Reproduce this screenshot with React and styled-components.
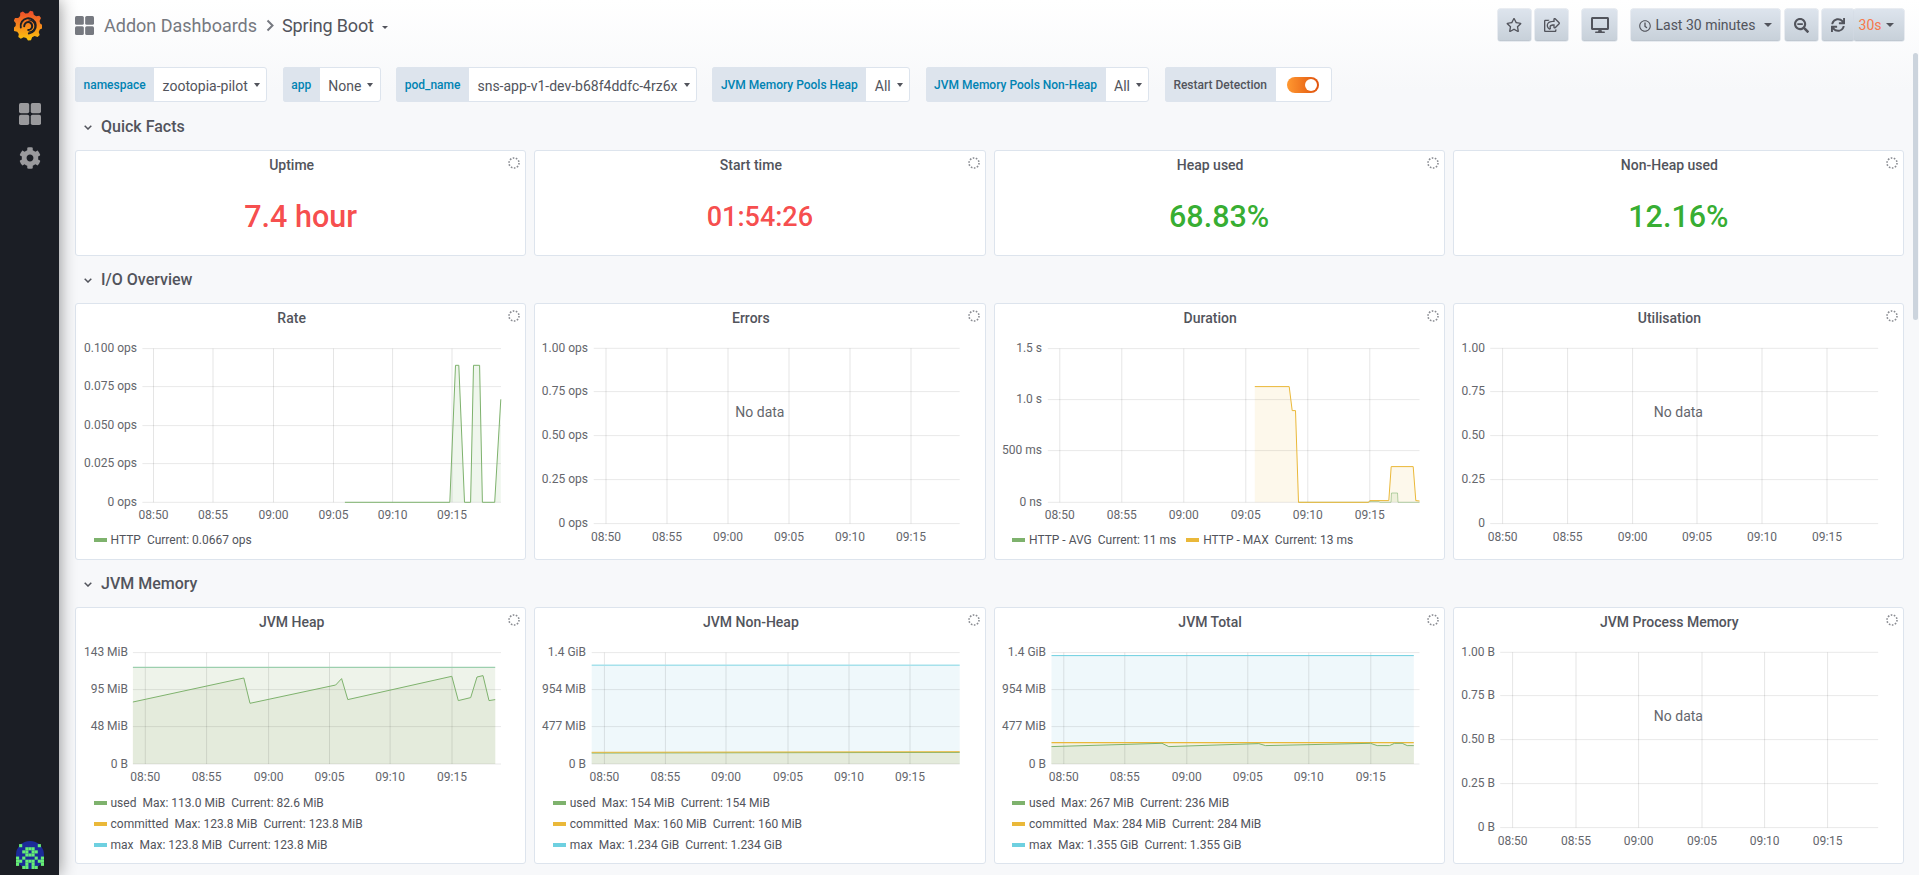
import React from 'react';
import styled, { createGlobalStyle } from 'styled-components';
import { FaRegStar, FaRegShareSquare, FaDesktop, FaRegClock, FaSearchMinus, FaSync, FaCog } from 'react-icons/fa';

const GlobalStyle = createGlobalStyle`
    html, body {
        margin: 0;
        height: 100%;
        overflow: hidden;
        background: #f7f8fa;
        font-family: Roboto, "Liberation Sans", sans-serif;
        color: #52545c;
    }
`;

const GREEN = '#7eb26d';
const YELLOW = '#eab839';
const TEAL = '#6ed0e0';

const Layout = styled.div`
    display: flex;
    height: 875px;
    overflow: hidden;
    position: relative;
`;

const SideMenu = styled.nav`
    width: 59px;
    flex: none;
    display: flex;
    flex-direction: column;
    align-items: center;
    background: #1b1e25;
    box-shadow: 0 0 16px rgba(0, 0, 0, 0.45);
    position: relative;
    z-index: 2;
    color: #9a9a9d;
`;

const LogoSlot = styled.div`
    height: 103px;
    padding: 10px 4px 0 0;
    box-sizing: border-box;
`;

const SideIcon = styled.div`
    height: 44px;
    font-size: 22px;
    line-height: 0;
`;

const AvatarSlot = styled.div`
    margin-top: auto;
    margin-bottom: 6px;
    line-height: 0;
`;

const Main = styled.main`
    flex: 1;
    min-width: 0;
    padding: 0 15px 0 16px;
    background: linear-gradient(180deg, #ffffff 0, #f7f8fa 90px);
`;

const Navbar = styled.header`
    height: 50px;
    padding-top: 9px;
    box-sizing: border-box;
    display: flex;
    align-items: flex-start;
`;

const Breadcrumb = styled.div`
    display: flex;
    align-items: center;
    height: 32px;
    font-size: 18px;
    color: #767980;
`;

const BreadIcon = styled.span`
    width: 19px;
    height: 19px;
    margin-right: 10px;
    line-height: 0;
    color: #767980;
`;

const Chevron = styled.svg`
    margin: 1px 8px 0 9px;
`;

const Current = styled.span`
    color: #52545c;
    letter-spacing: -0.15px;
`;

const TitleCaret = styled.i`
    width: 0;
    height: 0;
    margin: 4px 0 0 8px;
    border: 3px solid transparent;
    border-top: 3px solid #52545c;
    border-bottom: 0;
`;

const Toolbar = styled.div`
    margin-left: auto;
    display: flex;
`;

const Btn = styled.button`
    width: ${p => p.$w}px;
    height: 32px;
    margin-left: ${p => p.$gap || 0}px;
    padding: 0;
    display: flex;
    align-items: center;
    justify-content: center;
    gap: 4px;
    border: 0;
    border-radius: 2px;
    background: linear-gradient(180deg, #dde4ed, #c7d0d9);
    box-shadow: inset 0 -1px 0 rgba(0, 0, 0, 0.04), 0 0 0 0.5px #d3dae3;
    color: #52545c;
    font: 400 14px Roboto, "Liberation Sans", sans-serif;
`;

const IntervalBtn = styled(Btn)`
    padding-right: 5px;
    box-sizing: border-box;
`;

const Orange = styled.span`
    color: #f7784a;
`;

const NavCaret = styled.i`
    width: 0;
    height: 0;
    margin-left: ${p => p.$gap || 4}px;
    border: 4px solid transparent;
    border-top: 4px solid #52545c;
    border-bottom: 0;
`;

const ClockIcon = styled(FaRegClock)`
    margin-top: 2px;
`;

const Variables = styled.div`
    margin-top: 17px;
    height: 35px;
    display: flex;
    gap: 15.4px;
`;

const Variable = styled.div`
    display: flex;
    height: 35px;
    box-sizing: border-box;
    background: #fff;
    border: 1px solid #dde4ed;
    border-radius: 3px;
`;

const VarLabel = styled.label`
    display: flex;
    align-items: center;
    padding: 0 8.5px;
    margin: -1px 0 -1px -1px;
    background: #dde4ed;
    border-radius: 3px 0 0 3px;
    font-size: 12px;
    font-weight: 500;
    white-space: nowrap;
    color: ${p => (p.$plain ? '#52545c' : '#0083b3')};
`;

const VarValue = styled.div`
    display: flex;
    align-items: center;
    padding: 2px 6.5px 0 8.5px;
    font-size: 14px;
    white-space: nowrap;
`;

const ValueCaret = styled.i`
    width: 0;
    height: 0;
    margin: -1px 0 0 6px;
    border: 3.5px solid transparent;
    border-top: 4px solid #52545c;
    border-bottom: 0;
`;

const SwitchSlot = styled.div`
    width: 55px;
    display: flex;
    align-items: center;
    justify-content: center;
`;

const Switch = styled.div`
    width: 32px;
    height: 16px;
    border-radius: 8px;
    background: linear-gradient(90deg, #ff9830, #e0530e);
    position: relative;
    &::after {
        content: '';
        position: absolute;
        right: 2px;
        top: 2px;
        width: 12px;
        height: 12px;
        border-radius: 50%;
        background: #fff;
    }
`;

const RowTitle = styled.h6`
    margin: 0;
    height: ${p => p.$h}px;
    display: flex;
    align-items: center;
    font-size: 16px;
    font-weight: 500;
    color: #52545c;
`;

const RowChevron = styled.svg`
    margin: 3px 9px 0 9px;
`;

const Grid = styled.section`
    display: grid;
    grid-template-columns: repeat(4, 1fr);
    gap: 8px;
`;

const Panel = styled.article`
    height: ${p => p.$h}px;
    box-sizing: border-box;
    background: #fff;
    border: 1px solid #dde4ed;
    border-radius: 3px;
    position: relative;
    overflow: hidden;
`;

const PanelTitle = styled.div`
    height: 35px;
    padding-right: 18px;
    box-sizing: border-box;
    display: flex;
    align-items: center;
    justify-content: center;
    padding-bottom: 7px;
    font-size: 14px;
    font-weight: 500;
    color: #52545c;
`;

const Spinner = styled.svg`
    position: absolute;
    top: 5px;
    right: 4px;
`;

const StatValue = styled.div`
    margin-top: 3px;
    text-align: center;
    font-size: ${p => p.$size}px;
    font-weight: 500;
    line-height: 56px;
    color: ${p => p.$color};
`;

const ChartSvg = styled.svg`
    display: block;
    width: 100%;
`;

const AxisText = styled.text`
    font-family: Roboto, "Liberation Sans", sans-serif;
    font-size: 12px;
    fill: #64666c;
`;

const NoData = styled.div`
    position: absolute;
    left: 0;
    right: 0;
    top: 100px;
    text-align: center;
    font-size: 14px;
    color: #64666c;
`;

const Legend = styled.div`
    padding-left: 17.5px;
    display: flex;
    flex-direction: ${p => (p.$stacked ? 'column' : 'row')};
    gap: ${p => (p.$stacked ? 0 : 10)}px;
`;

const LegendItem = styled.div`
    height: 21px;
    display: flex;
    align-items: center;
    font-size: 12px;
    white-space: nowrap;
    color: #52545c;
`;

const Swatch = styled.i`
    width: 13px;
    height: 4px;
    margin-right: 4px;
    background: ${p => p.$color};
`;

const LegendStat = styled.span`
    margin-left: 6px;
`;

const ScrollThumb = styled.div`
    position: absolute;
    top: 53px;
    right: 1px;
    width: 5px;
    height: 267px;
    border-radius: 3px;
    background: #ccd4dd;
    z-index: 3;
`;

// drawings
const DashIcon = ({ size }) => (
    <svg width={size} height={size} viewBox="0 0 20 20" fill="currentColor">
        <rect x="0" y="0" width="9.3" height="9.3" rx="1.6" />
        <rect x="10.7" y="0" width="9.3" height="9.3" rx="1.6" />
        <rect x="0" y="10.7" width="9.3" height="9.3" rx="1.6" />
        <rect x="10.7" y="10.7" width="9.3" height="9.3" rx="1.6" />
    </svg>
);

const cogPoints = () => {
    const pts = [];
    for (let i = 0; i < 9; i++) {
        const a = (i / 9) * Math.PI * 2 - Math.PI / 2 + 0.25;
        [[-0.24, 12.4], [-0.1, 15], [0.1, 15], [0.24, 12.4]].forEach(([d, r]) => {
            pts.push(`${(14 + r * Math.cos(a + d)).toFixed(1)},${(15.6 + r * Math.sin(a + d)).toFixed(1)}`);
        });
    }
    return pts.join(' ');
};

const Logo = () => (
    <svg width="28" height="31" viewBox="0 0 28 31">
        <defs>
            <linearGradient id="logo" x1="0" y1="0" x2="0" y2="1">
                <stop offset="0" stopColor="#ee4a2c" />
                <stop offset="1" stopColor="#fcc50c" />
            </linearGradient>
        </defs>
        <polygon points={cogPoints()} fill="url(#logo)" />
        <path d="M6.8 17.5a7.6 7.6 0 1 1 8 6" fill="none" stroke="#1b1e25" strokeWidth="1.9" strokeLinecap="round" />
        <path d="M15 22a6 6 0 0 0 0-12" fill="none" stroke="#1b1e25" strokeWidth="1.2" strokeLinecap="round" />
        <path d="M10.2 16.2a4 4 0 1 1 4 3.9" fill="none" stroke="#1b1e25" strokeWidth="2" strokeLinecap="round" />
    </svg>
);

const AVATAR = [
    '.........',
    '.#.....#.',
    '...###...',
    '..##.##..',
    '...###...',
    '#.#...#.#',
    '##.###.##',
    '#..#.#..#',
    '..##.##..',
];

const Avatar = () => (
    <svg width="28" height="28" viewBox="0 0 27 27">
        <circle cx="13.5" cy="13.5" r="13.5" fill="#1c2b99" />
        {AVATAR.map((row, y) =>
            row.split('').map((c, x) => (c === '#' ? <rect key={`${x}-${y}`} x={x * 3} y={y * 3} width="3" height="3" fill="#66ee77" /> : null))
        )}
    </svg>
);

const PanelSpinner = () => (
    <Spinner width="14" height="14" viewBox="0 0 14 14">
        <circle cx="7" cy="7" r="5" fill="none" stroke="#8a8c92" strokeWidth="1.6" strokeDasharray="1.6 1.5" />
    </Spinner>
);

const TIMES = ['08:50', '08:55', '09:00', '09:05', '09:10', '09:15'];

const toPoints = pts => pts.map(p => p.join(',')).join(' ');

// coordinates below are pixels inside the panel
const Chart = ({ c, height }) => {
    const { ys, labelX, x0, x1, ticks, series = [] } = c;
    const top = ys[0][0];
    const bottom = ys[ys.length - 1][0];
    return (
        <ChartSvg height={height} viewBox={`1 36 449.25 ${height}`} preserveAspectRatio="xMinYMin slice">
            {series.filter(s => s.fill).map((s, i) => (
                <polygon
                    key={i}
                    fill={s.fill}
                    points={toPoints([[s.pts[0][0], bottom], ...s.pts, [s.pts[s.pts.length - 1][0], bottom]])}
                />
            ))}
            {ticks.map(x => (
                <line key={x} x1={x} x2={x} y1={top} y2={bottom} stroke="rgba(0,0,0,0.1)" />
            ))}
            {ys.map(([y, t]) => (
                <React.Fragment key={t}>
                    <line x1={x0} x2={x1} y1={y} y2={y} stroke="rgba(0,0,0,0.09)" />
                    <AxisText x={labelX} y={y + 3.5} textAnchor="end">{t}</AxisText>
                </React.Fragment>
            ))}
            {ticks.map((x, i) => (
                <AxisText key={x} x={x} y={bottom + 17} textAnchor="middle">{TIMES[i]}</AxisText>
            ))}
            {series.map((s, i) => (
                <polyline key={i} fill="none" stroke={s.color} strokeWidth={s.w || 1} points={toPoints(s.pts)} />
            ))}
        </ChartSvg>
    );
};

const rateChart = {
    labelX: 62,
    x0: 67.4,
    x1: 426,
    ticks: [78.5, 138, 198.5, 258.5, 317.6, 377],
    ys: [[45.6, '0.100 ops'], [83.6, '0.075 ops'], [122.6, '0.050 ops'], [160.6, '0.025 ops'], [199.3, '0 ops']],
    series: [
        {
            color: GREEN,
            fill: 'rgba(126,178,109,0.12)',
            pts: [[269.9, 199.3], [374.8, 199.3], [380.5, 62.3], [383.8, 62.3], [389.5, 199.3], [395.6, 199.3], [398.5, 62.3], [404.6, 62.3], [407.4, 199.3], [419.7, 199.3], [425.8, 96.3]],
        },
    ],
};

const noDataYs = unit => [[45.3, `1.00${unit}`], [88.6, `0.75${unit}`], [132.6, `0.50${unit}`], [176.6, `0.25${unit}`], [220.6, `0${unit}`]];

const errorsChart = { labelX: 54, x0: 59.7, x1: 425.7, ticks: [72, 133, 194, 255, 316, 377], ys: noDataYs(' ops') };

const durationChart = {
    labelX: 48,
    x0: 53.8,
    x1: 425.5,
    ticks: [65.8, 127.8, 189.8, 251.8, 313.8, 375.8],
    ys: [[45.6, '1.5 s'], [96.6, '1.0 s'], [147.6, '500 ms'], [199.3, '0 ns']],
    series: [
        {
            color: 'rgba(126,178,109,0.55)',
            fill: 'rgba(126,178,109,0.12)',
            pts: [[304.5, 199.3], [374.5, 199.3], [375.8, 198.6], [385, 198.6], [386, 199.3], [397, 199.3], [397.5, 190], [403.5, 190], [404, 199.3], [425.5, 199.3]],
        },
        {
            color: YELLOW,
            fill: 'rgba(234,184,57,0.1)',
            pts: [[260.8, 83.6], [295.2, 83.6], [298.2, 107.6], [301.5, 107.6], [304.5, 199.3], [374.5, 199.3], [375.8, 197.6], [394.8, 197.6], [397.2, 163.6], [419.2, 163.6], [421.8, 197.6], [425.5, 198]],
        },
    ],
};

const utilChart = { labelX: 32, x0: 37.2, x1: 425.2, ticks: [49.6, 114.6, 179.6, 244, 309, 374], ys: noDataYs('') };

const memYs = (a, b) => [[45.6, a], [82.6, b[0]], [119.6, b[1]], [157, '0 B']];

const heapChart = {
    labelX: 53,
    x0: 57.9,
    x1: 426,
    ticks: [70.3, 131.6, 193.6, 254.5, 315.1, 377],
    ys: memYs('143 MiB', ['95 MiB', '48 MiB']),
    series: [
        { color: '#9ccfae', fill: '#eef3ea', w: 1.3, pts: [[57.9, 60.3], [420.2, 60.3]] },
        {
            color: GREEN,
            fill: '#e4ebdc',
            pts: [[57.9, 95], [168.8, 71], [175, 96.3], [260.7, 78], [266.6, 71.6], [272.8, 92.6], [376.8, 69.3], [383.3, 93.6], [395.7, 90.6], [402, 70], [408, 68.6], [414, 93.6], [420.2, 92.6]],
        },
    ],
};

const nonHeapChart = {
    labelX: 52,
    x0: 57.7,
    x1: 425.7,
    ticks: [70.4, 131.4, 192, 254, 315, 376],
    ys: memYs('1.4 GiB', ['954 MiB', '477 MiB']),
    series: [
        { color: '#a6e1eb', fill: '#eff8fb', w: 1.5, pts: [[57.7, 58.3], [425.7, 58.3]] },
        { color: GREEN, fill: '#e4ebdc', pts: [[57.7, 146], [425.7, 145.4]] },
        { color: YELLOW, pts: [[57.7, 145.3], [425.7, 144.7]] },
    ],
};

const totalChart = {
    labelX: 52,
    x0: 57.5,
    x1: 425.5,
    ticks: [69.8, 130.8, 192.8, 253.8, 314.8, 376.8],
    ys: memYs('1.4 GiB', ['954 MiB', '477 MiB']),
    series: [
        { color: TEAL, fill: '#eff8fb', pts: [[57.5, 48.6], [419.8, 48.6]] },
        { color: YELLOW, fill: '#f4f3e3', w: 1.2, pts: [[57.5, 135.7], [419.8, 135.7]] },
        {
            color: GREEN,
            fill: '#e4ebdc',
            pts: [[57.5, 139.6], [168, 136.3], [174.8, 139.6], [264.8, 136.6], [271.5, 138.6], [376.5, 136.3], [383.2, 138.6], [395.5, 138.6], [400.5, 136.3], [408.2, 136.3], [413.2, 138.6], [419.8, 138.6]],
        },
    ],
};

const processChart = {
    labelX: 42,
    x0: 47.2,
    x1: 425.2,
    ticks: [59.6, 123, 185.6, 249, 311.6, 374.6],
    ys: noDataYs(' B'),
};

const memoryLegend = (used, committed, max) => [
    { color: GREEN, name: 'used', stats: used },
    { color: YELLOW, name: 'committed', stats: committed },
    { color: TEAL, name: 'max', stats: max },
];

const VARIABLES = [
    { label: 'namespace', value: 'zootopia-pilot' },
    { label: 'app', value: 'None' },
    { label: 'pod_name', value: 'sns-app-v1-dev-b68f4ddfc-4rz6x' },
    { label: 'JVM Memory Pools Heap', value: 'All' },
    { label: 'JVM Memory Pools Non-Heap', value: 'All' },
];

const STATS = [
    { title: 'Uptime', value: '7.4 hour', color: 'rgba(245, 54, 54, 0.9)', size: 30.5 },
    { title: 'Start time', value: '01:54:26', color: 'rgba(245, 54, 54, 0.9)', size: 27 },
    { title: 'Heap used', value: '68.83%', color: 'rgba(50, 172, 45, 0.97)', size: 30.5 },
    { title: 'Non-Heap used', value: '12.16%', color: 'rgba(50, 172, 45, 0.97)', size: 30.5 },
];

const GraphPanel = ({ title, chart, legend, stacked, noData }) => {
    const height = legend ? (stacked ? 149.5 : 191) : 214;
    return (
        <Panel $h={257}>
            <PanelTitle>{title}</PanelTitle>
            <PanelSpinner />
            <Chart c={chart} height={height} />
            {noData && <NoData>No data</NoData>}
            {legend && (
                <Legend $stacked={stacked}>
                    {legend.map(l => (
                        <LegendItem key={l.name}>
                            <Swatch $color={l.color} />
                            {l.name}
                            {l.stats.map(s => (
                                <LegendStat key={s}>{s}</LegendStat>
                            ))}
                        </LegendItem>
                    ))}
                </Legend>
            )}
        </Panel>
    );
};

const Row = ({ title, h }) => (
    <RowTitle $h={h}>
        <RowChevron width="8" height="5" viewBox="0 0 8 5">
            <polyline points="0.7,0.7 4,4 7.3,0.7" fill="none" stroke="#52545c" strokeWidth="1.5" />
        </RowChevron>
        {title}
    </RowTitle>
);

const App = () => (
    <Layout>
        <GlobalStyle />
        <SideMenu>
            <LogoSlot>
                <Logo />
            </LogoSlot>
            <SideIcon>
                <DashIcon size={22} />
            </SideIcon>
            <SideIcon>
                <FaCog />
            </SideIcon>
            <AvatarSlot>
                <Avatar />
            </AvatarSlot>
        </SideMenu>
        <Main>
            <Navbar>
                <Breadcrumb>
                    <BreadIcon>
                        <DashIcon size={19} />
                    </BreadIcon>
                    Addon Dashboards
                    <Chevron width="8" height="13" viewBox="0 0 8 13">
                        <polyline points="1.5,1.5 6.5,6.5 1.5,11.5" fill="none" stroke="#767980" strokeWidth="2" />
                    </Chevron>
                    <Current>Spring Boot</Current>
                    <TitleCaret />
                </Breadcrumb>
                <Toolbar>
                    <Btn $w={33}><FaRegStar size={16} /></Btn>
                    <Btn $w={33} $gap={4.5}><FaRegShareSquare size={16} /></Btn>
                    <Btn $w={35} $gap={14}><FaDesktop size={18} /></Btn>
                    <Btn $w={149} $gap={14}>
                        <ClockIcon size={12} />
                        Last 30 minutes
                        <NavCaret $gap={4} />
                    </Btn>
                    <Btn $w={33} $gap={4.5}><FaSearchMinus size={15} /></Btn>
                    <Btn $w={32} $gap={4.5}><FaSync size={14} /></Btn>
                    <IntervalBtn $w={50}>
                        <Orange>30s</Orange>
                        <NavCaret $gap={1} />
                    </IntervalBtn>
                </Toolbar>
            </Navbar>
            <Variables>
                {VARIABLES.map(v => (
                    <Variable key={v.label}>
                        <VarLabel>{v.label}</VarLabel>
                        <VarValue>
                            {v.value}
                            <ValueCaret />
                        </VarValue>
                    </Variable>
                ))}
                <Variable>
                    <VarLabel $plain>Restart Detection</VarLabel>
                    <SwitchSlot>
                        <Switch />
                    </SwitchSlot>
                </Variable>
            </Variables>
            <Row title="Quick Facts" h={48.3} />
            <Grid>
                {STATS.map(s => (
                    <Panel key={s.title} $h={105.4}>
                        <PanelTitle>{s.title}</PanelTitle>
                        <PanelSpinner />
                        <StatValue $color={s.color} $size={s.size}>{s.value}</StatValue>
                    </Panel>
                ))}
            </Grid>
            <Row title="I/O Overview" h={47} />
            <Grid>
                <GraphPanel
                    title="Rate"
                    chart={rateChart}
                    legend={[{ color: GREEN, name: 'HTTP', stats: ['Current: 0.0667 ops'] }]}
                />
                <GraphPanel title="Errors" chart={errorsChart} noData />
                <GraphPanel
                    title="Duration"
                    chart={durationChart}
                    legend={[
                        { color: GREEN, name: 'HTTP - AVG', stats: ['Current: 11 ms'] },
                        { color: YELLOW, name: 'HTTP - MAX', stats: ['Current: 13 ms'] },
                    ]}
                />
                <GraphPanel title="Utilisation" chart={utilChart} noData />
            </Grid>
            <Row title="JVM Memory" h={47} />
            <Grid>
                <GraphPanel
                    title="JVM Heap"
                    chart={heapChart}
                    stacked
                    legend={memoryLegend(
                        ['Max: 113.0 MiB', 'Current: 82.6 MiB'],
                        ['Max: 123.8 MiB', 'Current: 123.8 MiB'],
                        ['Max: 123.8 MiB', 'Current: 123.8 MiB']
                    )}
                />
                <GraphPanel
                    title="JVM Non-Heap"
                    chart={nonHeapChart}
                    stacked
                    legend={memoryLegend(
                        ['Max: 154 MiB', 'Current: 154 MiB'],
                        ['Max: 160 MiB', 'Current: 160 MiB'],
                        ['Max: 1.234 GiB', 'Current: 1.234 GiB']
                    )}
                />
                <GraphPanel
                    title="JVM Total"
                    chart={totalChart}
                    stacked
                    legend={memoryLegend(
                        ['Max: 267 MiB', 'Current: 236 MiB'],
                        ['Max: 284 MiB', 'Current: 284 MiB'],
                        ['Max: 1.355 GiB', 'Current: 1.355 GiB']
                    )}
                />
                <GraphPanel title="JVM Process Memory" chart={processChart} noData />
            </Grid>
        </Main>
        <ScrollThumb />
    </Layout>
);

export default App;
